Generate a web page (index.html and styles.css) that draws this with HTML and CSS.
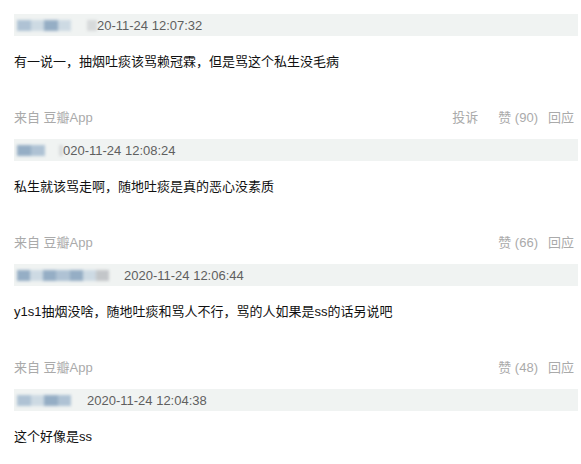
FILE: index.html
```html
<!DOCTYPE html>
<html lang="zh-CN">
<head>
  <meta charset="UTF-8" />
  <title>回应</title>
  <link rel="stylesheet" href="styles.css">
</head>
<body>
  <div class="comments">

    <div class="comment">
      <div class="comment-head">
        <span class="blur-name w54"><i class="c1"></i><i class="c2"></i><i class="c3"></i><i class="c2"></i></span>
        <span class="blur-name w10 faint"><i class="c4"></i></span>
        <span class="time">20-11-24 12:07:32</span>
      </div>
      <p class="content">有一说一，抽烟吐痰该骂赖冠霖，但是骂这个私生没毛病</p>
      <div class="meta">
        <span class="source">来自 豆瓣App</span>
        <span class="actions"><a class="report">投诉</a><a>赞 (90)</a><a>回应</a></span>
      </div>
    </div>

    <div class="comment">
      <div class="comment-head">
        <span class="blur-name w30"><i class="c3"></i><i class="c1"></i></span>
        <span class="blur-name w3 faint"><i class="c4"></i></span>
        <span class="time">020-11-24 12:08:24</span>
      </div>
      <p class="content">私生就该骂走啊，随地吐痰是真的恶心没素质</p>
      <div class="meta">
        <span class="source">来自 豆瓣App</span>
        <span class="actions"><a>赞 (66)</a><a>回应</a></span>
      </div>
    </div>

    <div class="comment">
      <div class="comment-head">
        <span class="blur-name w94"><i class="c3"></i><i class="c2"></i><i class="c3"></i><i class="c1"></i><i class="c3"></i><i class="c2"></i><i class="c4"></i></span>
        <span class="time wide">2020-11-24 12:06:44</span>
      </div>
      <p class="content">y1s1抽烟没啥，随地吐痰和骂人不行，骂的人如果是ss的话另说吧</p>
      <div class="meta">
        <span class="source">来自 豆瓣App</span>
        <span class="actions"><a>赞 (48)</a><a>回应</a></span>
      </div>
    </div>

    <div class="comment">
      <div class="comment-head">
        <span class="blur-name w54"><i class="c1"></i><i class="c2"></i><i class="c3"></i><i class="c1"></i></span>
        <span class="time">2020-11-24 12:04:38</span>
      </div>
      <p class="content">这个好像是ss</p>
    </div>

  </div>
</body>
</html>
```

FILE: styles.css
```css
* {
  box-sizing: border-box;
  margin: 0;
  padding: 0;
}

body {
  background: #fff;
  font-family: Arial, "Liberation Sans", "Noto Sans CJK SC", sans-serif;
  font-size: 13px;
  color: #111;
}

.comments {
  padding: 14px 3px 0 14px;
}

.comment {
  margin-bottom: 12px;
}

.comment-head {
  display: flex;
  align-items: center;
  height: 22px;
  padding-left: 3px;
  background: #f0f3f2;
}

.blur-name {
  display: flex;
  height: 11px;
  filter: blur(1.4px);
  opacity: 0.8;
}

.blur-name i {
  flex: 1;
}

.blur-name.faint {
  opacity: 0.45;
}

.w54 { width: 54px; }
.w30 { width: 28px; }
.w94 { width: 92px; }
.w10 { width: 10px; margin-left: 16px; }
.w3 { width: 4px; margin-left: 14px; }

.c1 { background: #9fb7cd; }
.c2 { background: #c5d4e0; }
.c3 { background: #7f9dba; }
.c4 { background: #b9bcc0; }

.time {
  margin-left: 16px;
  color: #5f5f5f;
  font-size: 13px;
}

.comment-head .faint + .time {
  margin-left: 0;
}

.time.wide {
  margin-left: 15px;
}

.content {
  margin-top: 17px;
  line-height: 18px;
  color: #111;
}

.meta {
  display: flex;
  justify-content: space-between;
  margin-top: 38px;
  line-height: 18px;
  color: #aaa;
}

.actions {
  display: flex;
  gap: 10px;
  padding-right: 4px;
}

.actions .report {
  margin-right: 10px;
}
```
